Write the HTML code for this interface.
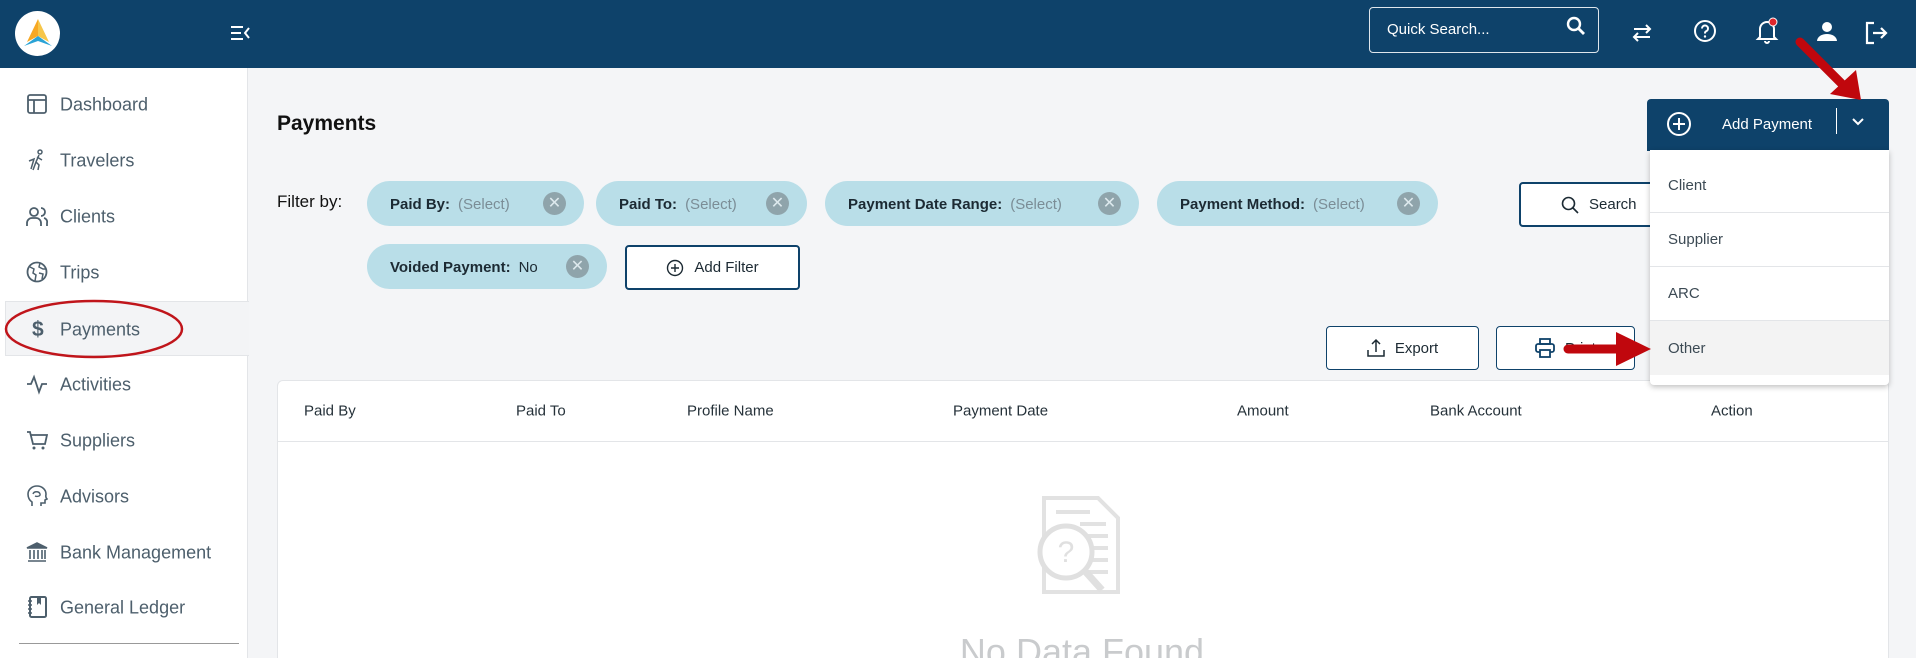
<!DOCTYPE html>
<html><head><meta charset="utf-8"><style>
*{box-sizing:border-box;margin:0;padding:0}
html{width:1916px;height:658px;overflow:hidden}
body{width:1916px;height:658px;overflow:hidden;background:#f4f5f7;font-family:"Liberation Sans",sans-serif;position:relative}
.hdr{position:absolute;left:0;top:0;width:1916px;height:68px;background:#0e426a}
.abs{position:absolute}
.side{position:absolute;left:0;top:68px;width:248px;height:590px;background:#fff;border-right:1px solid #e3e5e8}
.nav{position:absolute;left:60px;font-size:18px;color:#4d5f6c;transform:translateY(-50%);margin-top:1px}
.ic{position:absolute;left:26px;width:22px;height:22px;transform:translateY(-50%)}
.chip{position:absolute;height:45px;border-radius:23px;background:#b9dee8;font-size:15px;color:#1c2a33;display:flex;align-items:center;padding-left:23px;white-space:nowrap;padding-top:2px}
.chip b{font-weight:bold;margin-right:8px}
.chip span{color:#7b8d96}
.chip i{position:absolute;right:18px;top:11px;width:23px;height:23px;border-radius:50%;background:#8fa4ab;color:#dde9ed;font-style:normal;font-size:16px;text-align:center;line-height:23px}
.btn{position:absolute;border:2px solid #0e426a;border-radius:4px;background:#fff;color:#0e426a;font-size:15px;display:flex;align-items:center;justify-content:center;gap:10px}
.th{position:absolute;top:411px;font-size:15px;color:#26323a;transform:translateY(-50%)}
.dd{position:absolute;left:1650px;top:150px;width:239px;height:235px;background:#fff;box-shadow:0 2px 6px rgba(0,0,0,.25);border-radius:0 0 4px 4px}
.di{height:54px;border-bottom:1px solid #e3e5e8;font-size:15px;color:#3c4a54;padding-left:18px;display:flex;align-items:center}
</style></head><body>
<div class="hdr">
 <div class="abs" style="left:15px;top:11px;width:45px;height:45px;border-radius:50%;background:#fff"></div>
 <svg class="abs" style="left:20px;top:16px" width="36" height="36" viewBox="0 0 36 36"><path d="M18 3 L7 26 L18 20 Z" fill="#f7a823"/><path d="M18 3 L29 26 L18 20 Z" fill="#f6c64a"/><path d="M4 30 L18 20 L32 30 L18 25 Z" fill="#2aa3d6"/></svg>
 <svg class="abs" style="left:230px;top:24px" width="22" height="18" viewBox="0 0 22 18"><path d="M1 3H13M1 9H11M1 15H13M19 4L15 9L19 14" stroke="#fff" stroke-width="2" fill="none"/></svg>
 <div class="abs" style="left:1369px;top:7px;width:230px;height:46px;border:1.5px solid #dfe6ec;border-radius:4px"></div>
 <div class="abs" style="left:1387px;top:21px;color:#fff;font-size:15px">Quick Search...</div>
 <svg class="abs" style="left:1566px;top:16px" width="20" height="20" viewBox="0 0 20 20"><circle cx="8" cy="8" r="6" stroke="#fff" stroke-width="2.4" fill="none"/><path d="M12.5 12.5L18 18" stroke="#fff" stroke-width="2.8"/></svg>
 <svg class="abs" style="left:1630px;top:22px" width="24" height="22" viewBox="0 0 24 22"><path d="M4 7H20M16 3L20 7L16 11M20 15H4M8 11L4 15L8 19" stroke="#fff" stroke-width="2" fill="none"/></svg>
 <svg class="abs" style="left:1693px;top:19px" width="24" height="24" viewBox="0 0 24 24"><circle cx="12" cy="12" r="10" stroke="#fff" stroke-width="2" fill="none"/><path d="M9 9.5a3 3 0 1 1 4 2.8c-1 .4-1 1-1 2.2" stroke="#fff" stroke-width="2" fill="none"/><circle cx="12" cy="17.5" r="1.2" fill="#fff"/></svg>
 <svg class="abs" style="left:1755px;top:17px" width="26" height="28" viewBox="0 0 26 28"><path d="M5 20V12a7 7 0 0 1 14 0v8l2 2H3z" stroke="#fff" stroke-width="2" fill="none"/><path d="M10 24a2 2 0 0 0 4 0" stroke="#fff" stroke-width="2" fill="none"/><circle cx="18" cy="5" r="4" fill="#e0262c" stroke="#fff" stroke-width="1"/></svg>
 <svg class="abs" style="left:1816px;top:21px" width="22" height="22" viewBox="0 0 22 22"><circle cx="11" cy="6" r="5" fill="#fff"/><path d="M1 20a10 7 0 0 1 20 0z" fill="#fff"/></svg>
 <svg class="abs" style="left:1864px;top:21px" width="26" height="24" viewBox="0 0 26 24"><path d="M10 2H3V22H10M9 12H22M17 7L22 12L17 17" stroke="#fff" stroke-width="2.2" fill="none"/></svg>
</div>
<div class="side">
 <div class="abs" style="left:5px;top:233px;width:244px;height:55px;background:#f3f4f6;border:1px solid #e3e5e8;border-right:none"></div>
 <div class="abs" style="left:19px;top:575px;width:220px;height:1px;background:#999"></div>
</div>
<svg class="ic" style="top:104px" viewBox="0 0 22 22"><rect x="2" y="2" width="18" height="18" rx="2" stroke="#4d5f6c" stroke-width="1.8" fill="none"/><path d="M2 7H20M8 7V20" stroke="#4d5f6c" stroke-width="1.8"/></svg><div class="nav" style="top:104px">Dashboard</div>
<svg class="ic" style="top:160px" viewBox="0 0 22 22"><circle cx="14" cy="3" r="2" stroke="#4d5f6c" fill="none" stroke-width="1.5"/><path d="M13 6L10 13L13 16L12 21M10 13L7 21M11 8L16 11M3 12L8 10L5 20" stroke="#4d5f6c" stroke-width="1.5" fill="none"/></svg><div class="nav" style="top:160px">Travelers</div>
<svg class="ic" style="top:216px" viewBox="0 0 22 22"><circle cx="8" cy="7" r="4" stroke="#4d5f6c" fill="none" stroke-width="1.8"/><path d="M1 21V18a5 5 0 0 1 5-5h4a5 5 0 0 1 5 5v3M15 3a4 4 0 0 1 0 8M18 13a4 4 0 0 1 3 5v3" stroke="#4d5f6c" fill="none" stroke-width="1.8"/></svg><div class="nav" style="top:216px">Clients</div>
<svg class="ic" style="top:272px" viewBox="0 0 22 22"><circle cx="11" cy="11" r="9.5" stroke="#4d5f6c" fill="none" stroke-width="1.8"/><path d="M4 6L8 8L7 12L10 14L9 20M14 2L13 6L17 8L20 8M13 12L17 13L16 18" stroke="#4d5f6c" fill="none" stroke-width="1.5"/></svg><div class="nav" style="top:272px">Trips</div>
<div class="nav" style="top:329px;left:32px;font-size:21px;font-weight:bold">$</div><div class="nav" style="top:329px">Payments</div>
<svg class="ic" style="top:384px" viewBox="0 0 22 22"><path d="M1 11H5L8 4L13 19L16 11H21" stroke="#4d5f6c" fill="none" stroke-width="1.8"/></svg><div class="nav" style="top:384px">Activities</div>
<svg class="ic" style="top:440px" viewBox="0 0 22 22"><path d="M1 3H4L7 15H19L21 6H5" stroke="#4d5f6c" fill="none" stroke-width="1.8"/><circle cx="8" cy="19" r="1.5" fill="#4d5f6c"/><circle cx="17" cy="19" r="1.5" fill="#4d5f6c"/></svg><div class="nav" style="top:440px">Suppliers</div>
<svg class="ic" style="top:496px" viewBox="0 0 22 22"><path d="M6 21V17C3 15 2 12 2 9a9 8 0 0 1 18 0c0 2-1 3 1 5l-2 1v3h-4v3" stroke="#4d5f6c" fill="none" stroke-width="1.6"/><path d="M7 9c1-3 6-3 7 0c1 2-3 3-5 2" stroke="#4d5f6c" fill="none" stroke-width="1.4"/></svg><div class="nav" style="top:496px">Advisors</div>
<svg class="ic" style="top:552px" viewBox="0 0 22 22"><path d="M1 7L11 2L21 7ZM2 20H20M4 9V18M8 9V18M12 9V18M16 9V18M19 9V18" stroke="#4d5f6c" fill="#4d5f6c" stroke-width="1.6"/></svg><div class="nav" style="top:552px">Bank Management</div>
<svg class="ic" style="top:607px" viewBox="0 0 22 22"><rect x="4" y="1" width="16" height="20" rx="1.5" stroke="#4d5f6c" fill="none" stroke-width="2"/><path d="M2 5H6M2 9H6M2 13H6M2 17H6" stroke="#4d5f6c" stroke-width="1.5"/><path d="M11 1V9L13 7L15 9V1" fill="#4d5f6c"/></svg><div class="nav" style="top:607px">General Ledger</div>
<svg class="abs" style="left:0;top:296px" width="190" height="66"><ellipse cx="94" cy="33" rx="88" ry="28" stroke="#c0151b" stroke-width="2.5" fill="none"/></svg>

<div class="abs" style="left:277px;top:112px;font-size:21px;font-weight:bold;color:#111">Payments</div>
<div class="abs" style="left:277px;top:192px;font-size:17px;color:#111">Filter by:</div>
<div class="chip" style="left:367px;top:181px;width:217px"><b>Paid By:</b><span>(Select)</span><i>✕</i></div>
<div class="chip" style="left:596px;top:181px;width:211px"><b>Paid To:</b><span>(Select)</span><i>✕</i></div>
<div class="chip" style="left:825px;top:181px;width:314px"><b>Payment Date Range:</b><span>(Select)</span><i>✕</i></div>
<div class="chip" style="left:1157px;top:181px;width:281px"><b>Payment Method:</b><span>(Select)</span><i>✕</i></div>
<div class="chip" style="left:367px;top:244px;width:240px"><b>Voided Payment:</b>No<i>✕</i></div>
<div class="btn" style="left:625px;top:245px;width:175px;height:45px;color:#1c2a33"><svg width="18" height="18" viewBox="0 0 18 18"><circle cx="9" cy="9" r="7.5" stroke="#1c2a33" fill="none" stroke-width="1.4"/><path d="M9 5V13M5 9H13" stroke="#1c2a33" stroke-width="1.4"/></svg>Add Filter</div>
<div class="btn" style="left:1519px;top:182px;width:160px;height:45px;color:#1c2a33;justify-content:flex-start;padding-left:40px"><svg width="18" height="18" viewBox="0 0 18 18"><circle cx="7.5" cy="7.5" r="6" stroke="#1c2a33" fill="none" stroke-width="1.6"/><path d="M12 12L17 17" stroke="#1c2a33" stroke-width="1.6"/></svg>Search</div>
<div class="btn" style="left:1326px;top:326px;width:153px;height:44px;border-width:1.5px;color:#1c2a33"><svg width="18" height="20" viewBox="0 0 18 20"><path d="M9 14V2M5 6L9 2L13 6M1 12V18H17V12" stroke="#1c2a33" fill="none" stroke-width="1.5"/></svg>Export</div>
<div class="btn" style="left:1496px;top:326px;width:139px;height:44px;border-width:1.5px;justify-content:flex-start;padding-left:38px;color:#1c2a33"><svg width="20" height="20" viewBox="0 0 20 20"><rect x="5" y="1" width="10" height="5" stroke="#0e426a" fill="none" stroke-width="1.8"/><rect x="1" y="6" width="18" height="8" rx="2" stroke="#0e426a" fill="none" stroke-width="1.8"/><rect x="5" y="12" width="10" height="7" stroke="#0e426a" fill="#fff" stroke-width="1.8"/></svg>Print</div>

<div class="abs" style="left:277px;top:380px;width:1612px;height:300px;background:#fff;border:1px solid #e3e5e8;border-radius:6px"></div>
<div class="abs" style="left:278px;top:441px;width:1610px;height:1px;background:#e3e5e8"></div>
<div class="th" style="left:304px">Paid By</div><div class="th" style="left:516px">Paid To</div><div class="th" style="left:687px">Profile Name</div><div class="th" style="left:953px">Payment Date</div><div class="th" style="left:1237px">Amount</div><div class="th" style="left:1430px">Bank Account</div><div class="th" style="left:1711px">Action</div>
<svg class="abs" style="left:1030px;top:494px" width="104" height="104" viewBox="0 0 104 104"><path d="M14 4H68L88 24V98H14Z" stroke="#e2e2e2" stroke-width="4" fill="none"/><path d="M26 18H60M50 30H76M56 42H78M56 54H78M56 66H78M56 78H78" stroke="#e2e2e2" stroke-width="4"/><circle cx="36" cy="58" r="26" stroke="#e0e0e0" stroke-width="5" fill="#fff"/><path d="M54 76L72 96" stroke="#e0e0e0" stroke-width="7"/><text x="36" y="68" font-size="30" text-anchor="middle" fill="#e0e0e0" font-family="Liberation Sans">?</text></svg>
<div class="abs" style="left:1082px;top:631px;transform:translateX(-50%);font-size:36px;color:#c9cbcd;white-space:nowrap">No Data Found</div>

<div class="abs" style="left:1647px;top:99px;width:242px;height:52px;background:#0e426a;border-radius:4px 4px 0 0"></div>
<svg class="abs" style="left:1666px;top:111px" width="26" height="26" viewBox="0 0 26 26"><circle cx="13" cy="13" r="11" stroke="#fff" stroke-width="2" fill="none"/><path d="M13 7V19M7 13H19" stroke="#fff" stroke-width="2"/></svg>
<div class="abs" style="left:1722px;top:116px;color:#fff;font-size:15px">Add Payment</div>
<div class="abs" style="left:1836px;top:108px;width:1px;height:26px;background:#fff"></div>
<svg class="abs" style="left:1851px;top:117px" width="14" height="10" viewBox="0 0 14 10"><path d="M2 2L7 7L12 2" stroke="#fff" stroke-width="2" fill="none"/></svg>
<div class="dd"><div class="di" style="height:63px;padding-top:8px">Client</div><div class="di">Supplier</div><div class="di">ARC</div><div class="di" style="background:#f3f3f3;border:none;height:54px">Other</div></div>

<svg class="abs" style="left:0;top:0" width="1916" height="658"><path d="M1800 42L1843 85" stroke="#c0070d" stroke-width="9" stroke-linecap="round"/><path d="M1830 94L1861 100L1856 70Z" fill="#c0070d"/><path d="M1568 349H1618" stroke="#c0070d" stroke-width="9" stroke-linecap="round"/><path d="M1616 332L1651 349L1616 366Z" fill="#c0070d"/></svg>
</body></html>
